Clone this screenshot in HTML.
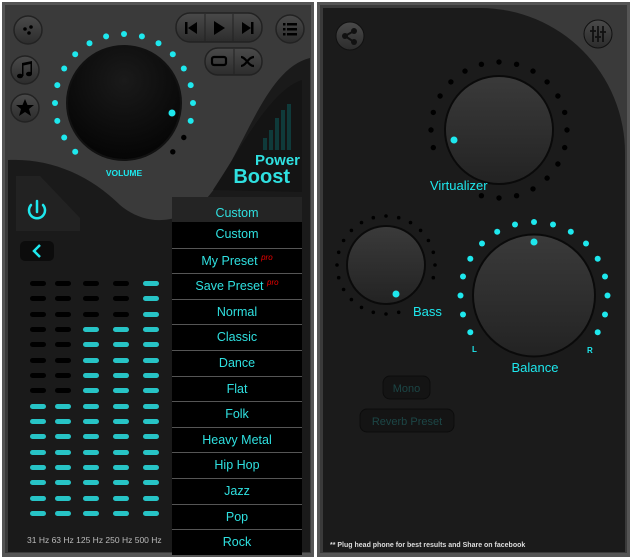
<!DOCTYPE html>
<html><head><meta charset="utf-8"><style>
*{margin:0;padding:0;box-sizing:border-box}
body{width:632px;height:560px;background:#fff;position:relative;overflow:hidden;font-family:"Liberation Sans",sans-serif}
.a{position:absolute}
.dd{position:absolute;left:172px;width:130px;height:25.6px;background:#000;border-top:1px solid #555;color:#2fe0e0;font-size:12.5px;text-align:center;line-height:24px;overflow:hidden}
.dd i{color:#e00;font-size:8px;position:relative;top:-5px;line-height:0}
.c{color:#2fe0e0}
</style></head><body>
<svg class="a" style="left:0;top:0" width="632" height="560">
<defs>
<radialGradient id="kb" cx="50%" cy="30%" r="70%"><stop offset="0" stop-color="#1a1a1a"/><stop offset="1" stop-color="#050505"/></radialGradient>
<linearGradient id="kg" x1="0" y1="0" x2="0" y2="1"><stop offset="0" stop-color="#3a3a3a"/><stop offset="1" stop-color="#232323"/></linearGradient>
<linearGradient id="bt" x1="0" y1="0" x2="0" y2="1"><stop offset="0" stop-color="#4a4a4a"/><stop offset="1" stop-color="#2c2c2c"/></linearGradient>
</defs>
<rect x="2" y="2" width="312" height="555" fill="#555"/>
<rect x="5" y="5" width="306" height="548" fill="#3a3a3a"/>
<path d="M8 160 C50 158 90 175 120 205 C140 222 170 228 200 205 C240 170 260 70 310 58 L310 552 L8 552 Z" fill="#1a1a1a"/>
<path d="M16 176 L40 176 L80 218 L80 231 L16 231 Z" fill="#222"/>
<path d="M213 190 C240 150 270 90 302 80 L302 192 Z" fill="#141414"/>
<g fill="#0f3a3a">
<rect x="263" y="138" width="4" height="12"/><rect x="269" y="130" width="4" height="20"/><rect x="275" y="118" width="4" height="32"/><rect x="281" y="110" width="4" height="40"/><rect x="287" y="104" width="4" height="46"/>
</g>
<g fill="url(#bt)" stroke="#222" stroke-width="1.5">
<circle cx="28" cy="30" r="14"/><circle cx="25" cy="70" r="14"/><circle cx="25" cy="108" r="14"/><circle cx="290" cy="29" r="14"/>
<rect x="176" y="13" width="86" height="29" rx="14"/><rect x="205" y="48" width="57" height="27" rx="13"/>
</g>
<g stroke="#222"><line x1="205" y1="14" x2="205" y2="41"/><line x1="233" y1="14" x2="233" y2="41"/><line x1="234" y1="49" x2="234" y2="74"/></g>
<g fill="#000">
<circle cx="25" cy="29" r="1.8"/><circle cx="31" cy="27" r="1.8"/><circle cx="29" cy="33" r="1.8"/>
<ellipse cx="20" cy="76" rx="3" ry="2.3"/><ellipse cx="29" cy="74" rx="3" ry="2.3"/>
<path d="M22 76 L22 63 L32 61 L32 74 L30.5 74 L30.5 64 L23.5 65.5 L23.5 76 Z"/>
<path d="M25 99 L27.5 105 L34 105 L29 109 L31 116 L25 112 L19 116 L21 109 L16 105 L22.5 105 Z"/>
<rect x="185" y="22" width="2.5" height="12"/><path d="M197 22 L188 28 L197 34 Z"/>
<path d="M214 21 L225 28 L214 35 Z"/>
<path d="M242 22 L251 28 L242 34 Z"/><rect x="251" y="22" width="2.5" height="12"/>
<rect x="283" y="23" width="2.5" height="2.5"/><rect x="283" y="28" width="2.5" height="2.5"/><rect x="283" y="33" width="2.5" height="2.5"/>
<rect x="287" y="23" width="10" height="2.5"/><rect x="287" y="28" width="10" height="2.5"/><rect x="287" y="33" width="10" height="2.5"/>
</g>
<rect x="212" y="57" width="14" height="8" rx="2" fill="none" stroke="#000" stroke-width="2.2"/>
<path d="M241 57 C246 57 248 66 254 66 M241 66 C246 66 248 57 254 57" fill="none" stroke="#000" stroke-width="2.2"/>
<g fill="#1ee8ee">
<circle cx="75.2" cy="151.8" r="3"/><circle cx="64.2" cy="137.5" r="3"/><circle cx="57.3" cy="120.9" r="3"/><circle cx="55" cy="103" r="3"/><circle cx="57.3" cy="85.1" r="3"/><circle cx="64.2" cy="68.5" r="3"/><circle cx="75.2" cy="54.2" r="3"/><circle cx="89.5" cy="43.2" r="3"/><circle cx="106.1" cy="36.4" r="3"/><circle cx="124" cy="34" r="3"/><circle cx="141.9" cy="36.4" r="3"/><circle cx="158.5" cy="43.2" r="3"/><circle cx="172.8" cy="54.2" r="3"/><circle cx="183.8" cy="68.5" r="3"/><circle cx="190.7" cy="85.1" r="3"/><circle cx="193" cy="103" r="3"/><circle cx="190.7" cy="120.9" r="3"/>
</g>
<circle cx="183.8" cy="137.5" r="2.7" fill="#000"/><circle cx="172.8" cy="151.8" r="2.7" fill="#000"/>
<circle cx="124" cy="103" r="58" fill="#111"/>
<circle cx="124" cy="103" r="56" fill="url(#kb)"/>
<circle cx="172" cy="113" r="3.5" fill="#1ee8ee"/>
<text x="124" y="176" text-anchor="middle" font-size="8.5" font-weight="bold" fill="#1ee8ee" font-family="Liberation Sans">VOLUME</text>
<path d="M31 205 A8 8 0 1 0 43 205" fill="none" stroke="#1ee8ee" stroke-width="2.5" stroke-linecap="round"/>
<line x1="37" y1="201" x2="37" y2="212" stroke="#1ee8ee" stroke-width="2.5" stroke-linecap="round"/>
<rect x="20" y="241" width="34" height="20" rx="5" fill="#0c0c0c"/>
<path d="M40 245 L34 251 L40 257" fill="none" stroke="#1ee8ee" stroke-width="2.5"/>
<g fill="#000">
<rect x="30" y="281" width="16" height="5" rx="2.5"/><rect x="55" y="281" width="16" height="5" rx="2.5"/><rect x="83" y="281" width="16" height="5" rx="2.5"/><rect x="113" y="281" width="16" height="5" rx="2.5"/>
<rect x="30" y="296" width="16" height="5" rx="2.5"/><rect x="55" y="296" width="16" height="5" rx="2.5"/><rect x="83" y="296" width="16" height="5" rx="2.5"/><rect x="113" y="296" width="16" height="5" rx="2.5"/>
<rect x="30" y="312" width="16" height="5" rx="2.5"/><rect x="55" y="312" width="16" height="5" rx="2.5"/><rect x="83" y="312" width="16" height="5" rx="2.5"/><rect x="113" y="312" width="16" height="5" rx="2.5"/>
<rect x="30" y="327" width="16" height="5" rx="2.5"/><rect x="55" y="327" width="16" height="5" rx="2.5"/>
<rect x="30" y="342" width="16" height="5" rx="2.5"/><rect x="55" y="342" width="16" height="5" rx="2.5"/>
<rect x="30" y="358" width="16" height="5" rx="2.5"/><rect x="55" y="358" width="16" height="5" rx="2.5"/>
<rect x="30" y="373" width="16" height="5" rx="2.5"/><rect x="55" y="373" width="16" height="5" rx="2.5"/>
<rect x="30" y="388" width="16" height="5" rx="2.5"/><rect x="55" y="388" width="16" height="5" rx="2.5"/>
</g>
<g fill="#27c4c6">
<rect x="143" y="281" width="16" height="5" rx="2.5"/><rect x="143" y="296" width="16" height="5" rx="2.5"/><rect x="143" y="312" width="16" height="5" rx="2.5"/>
<rect x="83" y="327" width="16" height="5" rx="2.5"/><rect x="113" y="327" width="16" height="5" rx="2.5"/><rect x="143" y="327" width="16" height="5" rx="2.5"/>
<rect x="83" y="342" width="16" height="5" rx="2.5"/><rect x="113" y="342" width="16" height="5" rx="2.5"/><rect x="143" y="342" width="16" height="5" rx="2.5"/>
<rect x="83" y="358" width="16" height="5" rx="2.5"/><rect x="113" y="358" width="16" height="5" rx="2.5"/><rect x="143" y="358" width="16" height="5" rx="2.5"/>
<rect x="83" y="373" width="16" height="5" rx="2.5"/><rect x="113" y="373" width="16" height="5" rx="2.5"/><rect x="143" y="373" width="16" height="5" rx="2.5"/>
<rect x="83" y="388" width="16" height="5" rx="2.5"/><rect x="113" y="388" width="16" height="5" rx="2.5"/><rect x="143" y="388" width="16" height="5" rx="2.5"/>
</g>
<g fill="#27c4c6">
<rect x="30" y="404" width="16" height="5" rx="2.5"/><rect x="55" y="404" width="16" height="5" rx="2.5"/><rect x="83" y="404" width="16" height="5" rx="2.5"/><rect x="113" y="404" width="16" height="5" rx="2.5"/><rect x="143" y="404" width="16" height="5" rx="2.5"/>
<rect x="30" y="419" width="16" height="5" rx="2.5"/><rect x="55" y="419" width="16" height="5" rx="2.5"/><rect x="83" y="419" width="16" height="5" rx="2.5"/><rect x="113" y="419" width="16" height="5" rx="2.5"/><rect x="143" y="419" width="16" height="5" rx="2.5"/>
<rect x="30" y="434" width="16" height="5" rx="2.5"/><rect x="55" y="434" width="16" height="5" rx="2.5"/><rect x="83" y="434" width="16" height="5" rx="2.5"/><rect x="113" y="434" width="16" height="5" rx="2.5"/><rect x="143" y="434" width="16" height="5" rx="2.5"/>
<rect x="30" y="450" width="16" height="5" rx="2.5"/><rect x="55" y="450" width="16" height="5" rx="2.5"/><rect x="83" y="450" width="16" height="5" rx="2.5"/><rect x="113" y="450" width="16" height="5" rx="2.5"/><rect x="143" y="450" width="16" height="5" rx="2.5"/>
<rect x="30" y="465" width="16" height="5" rx="2.5"/><rect x="55" y="465" width="16" height="5" rx="2.5"/><rect x="83" y="465" width="16" height="5" rx="2.5"/><rect x="113" y="465" width="16" height="5" rx="2.5"/><rect x="143" y="465" width="16" height="5" rx="2.5"/>
<rect x="30" y="480" width="16" height="5" rx="2.5"/><rect x="55" y="480" width="16" height="5" rx="2.5"/><rect x="83" y="480" width="16" height="5" rx="2.5"/><rect x="113" y="480" width="16" height="5" rx="2.5"/><rect x="143" y="480" width="16" height="5" rx="2.5"/>
<rect x="30" y="496" width="16" height="5" rx="2.5"/><rect x="55" y="496" width="16" height="5" rx="2.5"/><rect x="83" y="496" width="16" height="5" rx="2.5"/><rect x="113" y="496" width="16" height="5" rx="2.5"/><rect x="143" y="496" width="16" height="5" rx="2.5"/>
<rect x="30" y="511" width="16" height="5" rx="2.5"/><rect x="55" y="511" width="16" height="5" rx="2.5"/><rect x="83" y="511" width="16" height="5" rx="2.5"/><rect x="113" y="511" width="16" height="5" rx="2.5"/><rect x="143" y="511" width="16" height="5" rx="2.5"/>
</g>
<text x="27" y="543" font-size="8.5" fill="#bbb" font-family="Liberation Sans">31 Hz  63 Hz  125 Hz  250 Hz  500 Hz</text>

<rect x="317" y="2" width="313" height="555" fill="#555"/>
<rect x="320" y="5" width="307" height="548" fill="#3a3a3a"/>
<path d="M323 8 L480 8 A145 145 0 0 1 625 153 L625 552 L323 552 Z" fill="#1b1b1b"/>
<circle cx="350" cy="36" r="14" fill="url(#bt)" stroke="#111"/>
<g fill="#111"><circle cx="345" cy="36" r="3"/><circle cx="354" cy="31" r="3"/><circle cx="354" cy="42" r="3"/></g>
<path d="M345 36 L354 31 M345 36 L354 42" stroke="#111" stroke-width="2"/>
<circle cx="598" cy="34" r="14" fill="url(#bt)" stroke="#111"/>
<g stroke="#111" stroke-width="1.8"><line x1="593" y1="26" x2="593" y2="42"/><line x1="598" y1="26" x2="598" y2="42"/><line x1="603" y1="26" x2="603" y2="42"/><line x1="590" y1="31" x2="596" y2="31"/><line x1="595" y1="37" x2="601" y2="37"/><line x1="600" y1="32" x2="606" y2="32"/></g>
<g fill="#000">
<circle cx="499" cy="62" r="2.7"/><circle cx="516.6" cy="64.3" r="2.7"/><circle cx="533" cy="71.1" r="2.7"/><circle cx="547.1" cy="81.9" r="2.7"/><circle cx="557.9" cy="96" r="2.7"/><circle cx="564.7" cy="112.4" r="2.7"/><circle cx="567" cy="130" r="2.7"/><circle cx="564.7" cy="147.6" r="2.7"/><circle cx="557.9" cy="164" r="2.7"/><circle cx="547.1" cy="178.1" r="2.7"/><circle cx="533" cy="188.9" r="2.7"/><circle cx="516.6" cy="195.7" r="2.7"/><circle cx="499" cy="198" r="2.7"/><circle cx="481.4" cy="195.7" r="2.7"/><circle cx="433.3" cy="147.6" r="2.7"/><circle cx="431" cy="130" r="2.7"/><circle cx="433.3" cy="112.4" r="2.7"/><circle cx="440.1" cy="96" r="2.7"/><circle cx="450.9" cy="81.9" r="2.7"/><circle cx="465" cy="71.1" r="2.7"/><circle cx="481.4" cy="64.3" r="2.7"/>
</g>
<circle cx="499" cy="130" r="55" fill="#0a0a0a"/><circle cx="499" cy="130" r="53" fill="url(#kg)"/>
<circle cx="454" cy="140" r="3.5" fill="#1ee8ee"/>
<text x="430" y="190" font-size="13" fill="#1ee8ee">Virtualizer</text>
<g fill="#000">
<circle cx="386" cy="216" r="1.8"/><circle cx="398.7" cy="217.7" r="1.8"/><circle cx="410.5" cy="222.6" r="1.8"/><circle cx="420.6" cy="230.4" r="1.8"/><circle cx="428.4" cy="240.5" r="1.8"/><circle cx="433.3" cy="252.3" r="1.8"/><circle cx="435" cy="265" r="1.8"/><circle cx="433.3" cy="277.7" r="1.8"/><circle cx="398.7" cy="312.3" r="1.8"/><circle cx="386" cy="314" r="1.8"/><circle cx="373.3" cy="312.3" r="1.8"/><circle cx="361.5" cy="307.4" r="1.8"/><circle cx="351.4" cy="299.6" r="1.8"/><circle cx="343.6" cy="289.5" r="1.8"/><circle cx="338.7" cy="277.7" r="1.8"/><circle cx="337" cy="265" r="1.8"/><circle cx="338.7" cy="252.3" r="1.8"/><circle cx="343.6" cy="240.5" r="1.8"/><circle cx="351.4" cy="230.4" r="1.8"/><circle cx="361.5" cy="222.6" r="1.8"/><circle cx="373.3" cy="217.7" r="1.8"/>
</g>
<circle cx="386" cy="265" r="40" fill="#0a0a0a"/><circle cx="386" cy="265" r="38" fill="url(#kg)"/>
<circle cx="396" cy="294" r="3.5" fill="#1ee8ee"/>
<text x="413" y="316" font-size="13" fill="#1ee8ee">Bass</text>
<g fill="#1ee8ee">
<circle cx="534" cy="222" r="3"/><circle cx="553" cy="224.5" r="3"/><circle cx="570.8" cy="231.8" r="3"/><circle cx="586" cy="243.5" r="3"/><circle cx="597.7" cy="258.8" r="3"/><circle cx="605" cy="276.5" r="3"/><circle cx="607.5" cy="295.5" r="3"/><circle cx="605" cy="314.5" r="3"/><circle cx="597.7" cy="332.3" r="3"/>
<circle cx="515" cy="224.5" r="3"/><circle cx="497.2" cy="231.8" r="3"/><circle cx="482" cy="243.5" r="3"/><circle cx="470.3" cy="258.8" r="3"/><circle cx="463" cy="276.5" r="3"/><circle cx="460.5" cy="295.5" r="3"/><circle cx="463" cy="314.5" r="3"/><circle cx="470.3" cy="332.3" r="3"/>
</g>
<circle cx="534" cy="295.5" r="62" fill="#0a0a0a"/><circle cx="534" cy="295.5" r="60" fill="url(#kg)"/>
<circle cx="534" cy="242" r="3.5" fill="#1ee8ee"/>
<text x="472" y="352" font-size="8" font-weight="bold" fill="#1ee8ee">L</text>
<text x="587" y="353" font-size="8" font-weight="bold" fill="#1ee8ee">R</text>
<text x="535" y="372" font-size="13" text-anchor="middle" fill="#1ee8ee">Balance</text>
<rect x="383" y="376" width="47" height="23" rx="7" fill="#141414" stroke="#0c0c0c"/>
<text x="406.5" y="392" font-size="11" text-anchor="middle" fill="#1c4646">Mono</text>
<rect x="360" y="409" width="94" height="23" rx="7" fill="#141414" stroke="#0c0c0c"/>
<text x="407" y="425" font-size="11" text-anchor="middle" fill="#1c4646">Reverb Preset</text>
<text x="330" y="547" font-size="7" font-weight="bold" fill="#ddd">** Plug head phone  for best results and Share on facebook</text>
</svg>

<div class="a c" style="left:230px;top:152px;width:70px;text-align:right;font-size:15px;font-weight:bold">Power</div>
<div class="a c" style="left:220px;top:166px;width:70px;text-align:right;font-size:20px;font-weight:bold">Boost</div>

<div class="a" style="left:172px;top:197px;width:130px;height:25px;background:#242424;color:#2fe0e0;font-size:12.5px;text-align:center;line-height:32px">Custom</div>
<div class="dd" style="top:222px;border-top:none">Custom</div>
<div class="dd" style="top:247.6px">My Preset <i>pro</i></div>
<div class="dd" style="top:273.2px">Save Preset <i>pro</i></div>
<div class="dd" style="top:298.8px">Normal</div>
<div class="dd" style="top:324.4px">Classic</div>
<div class="dd" style="top:350px">Dance</div>
<div class="dd" style="top:375.6px">Flat</div>
<div class="dd" style="top:401.2px">Folk</div>
<div class="dd" style="top:426.8px">Heavy Metal</div>
<div class="dd" style="top:452.4px">Hip Hop</div>
<div class="dd" style="top:478px">Jazz</div>
<div class="dd" style="top:503.6px">Pop</div>
<div class="dd" style="top:529.2px">Rock</div>
</body></html>
